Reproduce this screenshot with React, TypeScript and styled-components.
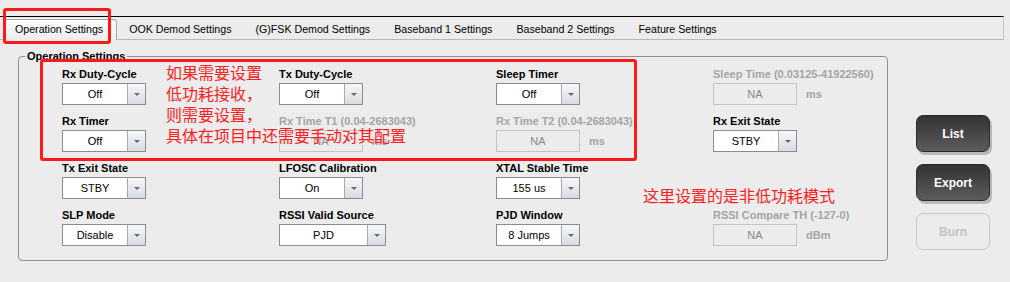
import React from "react";
import styled, { createGlobalStyle, css } from "styled-components";

const GlobalStyle = createGlobalStyle`
  html, body {
    margin: 0;
    padding: 0;
    background: #ececec;
  }
  body {
    font-family: "Liberation Sans", Arial, sans-serif;
    font-size: 11px;
    color: #000;
  }
`;

const Page = styled.div`
  position: relative;
  width: 1010px;
  height: 282px;
  overflow: hidden;
  background: #ececec;
`;

const TabStrip = styled.div`
  margin-top: 16px;
  border-top: 1px solid #000;
  border-bottom: 1px solid #b8b8b8;
  border-right: 1px solid #c8c8c8;
  width: 1004px;
  height: 24px;
  display: flex;
  align-items: flex-end;
  padding-left: 5px;
  box-sizing: border-box;
`;

const Tab = styled.div<{ $active?: boolean }>`
  padding: 0 12px;
  height: 19px;
  line-height: 19px;
  font-size: 10.65px;
  white-space: nowrap;
  ${(p) =>
    p.$active &&
    css`
      height: 20px;
      margin-bottom: -1px;
      padding: 0 13px 0 9px;
      background: linear-gradient(#fbfbfb, #ededed);
      border: 1px solid #a9a9a9;
      border-bottom: none;
      border-radius: 2px 4px 0 0;
    `}
`;

const Body = styled.div`
  display: flex;
  align-items: flex-start;
  padding-left: 18px;
  margin-top: 9px;
`;

const Group = styled.fieldset`
  margin: 0;
  padding: 0;
  width: 870px;
  box-sizing: border-box;
  border: 1px solid #8f8f8f;
  border-radius: 4px;
`;

const GroupTitle = styled.legend`
  margin-left: 6px;
  padding: 0 2px;
  font-weight: bold;
  font-size: 11px;
  line-height: 14px;
`;

const Grid = styled.div`
  display: grid;
  grid-template-columns: 217px 217px 217px 1fr;
  row-gap: 9px;
  padding: 4px 0 14px 43px;
`;

const Field = styled.div`
  display: flex;
  flex-direction: column;
  gap: 2px;
`;

const Label = styled.div<{ $disabled?: boolean }>`
  font-weight: bold;
  font-size: 11px;
  line-height: 14px;
  white-space: nowrap;
  color: ${(p) => (p.$disabled ? "#a4a4a4" : "#000")};
`;

const Combo = styled.div<{ $w?: number }>`
  width: ${(p) => p.$w ?? 84}px;
  height: 22px;
  box-sizing: border-box;
  display: flex;
  border: 1px solid #8c8c8c;
  background: #fff;
`;

const ComboValue = styled.div`
  flex: 1;
  text-align: center;
  line-height: 20px;
  font-size: 11px;
`;

const ComboArrow = styled.div`
  width: 17px;
  border-left: 1px solid #a9a9a9;
  background: linear-gradient(#f6f7f9, #d8dce2);
  display: flex;
  align-items: center;
  justify-content: center;
  &::after {
    content: "";
    border-left: 3px solid transparent;
    border-right: 3px solid transparent;
    border-top: 3px solid #6a6a6a;
  }
`;

const InputRow = styled.div`
  display: flex;
  align-items: center;
`;

const TextBox = styled.div`
  width: 84px;
  height: 22px;
  box-sizing: border-box;
  border: 1px solid #c3c3c3;
  background: #ececec;
  color: #8a8a8a;
  text-align: center;
  line-height: 20px;
  font-size: 11px;
`;

const Unit = styled.span`
  margin-left: 9px;
  font-weight: bold;
  color: #a4a4a4;
  font-size: 11px;
`;

const Buttons = styled.div`
  display: flex;
  flex-direction: column;
  gap: 12px;
  margin-left: 28px;
  padding-top: 66px;
`;

const Button = styled.button<{ $disabled?: boolean }>`
  width: 74px;
  height: 37px;
  border-radius: 7px;
  font-family: "Liberation Sans", Arial, sans-serif;
  font-weight: bold;
  font-size: 12px;
  padding: 0;
  ${(p) =>
    p.$disabled
      ? css`
          background: #ececec;
          border: 1px solid #c9c9c9;
          color: #c3c3c3;
        `
      : css`
          background: linear-gradient(#333333, #5c5c5c);
          border: 1px solid #2a2a2a;
          color: #fff;
          box-shadow: 2px 3px 0 #b9b9b9;
        `}
`;

const RedBox = styled.div<{ $x: number; $y: number; $w: number; $h: number }>`
  position: absolute;
  left: ${(p) => p.$x}px;
  top: ${(p) => p.$y}px;
  width: ${(p) => p.$w}px;
  height: ${(p) => p.$h}px;
  box-sizing: border-box;
  border: 3px solid #ff1a1a;
  border-radius: 3px;
  pointer-events: none;
`;

const Note = styled.div<{ $x: number; $y: number }>`
  position: absolute;
  left: ${(p) => p.$x}px;
  top: ${(p) => p.$y}px;
  font-family: "Noto Sans CJK SC", "Liberation Sans", sans-serif;
  font-size: 16px;
  line-height: 21px;
  color: #ff2020;
  white-space: nowrap;
`;

const Select = ({ label, value, w }: { label: string; value: string; w?: number }) => (
  <Field>
    <Label>{label}</Label>
    <Combo $w={w}>
      <ComboValue>{value}</ComboValue>
      <ComboArrow />
    </Combo>
  </Field>
);

const Disabled = ({ label, unit }: { label: string; unit: string }) => (
  <Field>
    <Label $disabled>{label}</Label>
    <InputRow>
      <TextBox>NA</TextBox>
      <Unit>{unit}</Unit>
    </InputRow>
  </Field>
);

const tabs = [
  "Operation Settings",
  "OOK Demod Settings",
  "(G)FSK Demod Settings",
  "Baseband 1 Settings",
  "Baseband 2 Settings",
  "Feature Settings",
];

export default function App() {
  return (
    <Page>
      <GlobalStyle />
      <TabStrip>
        {tabs.map((t, i) => (
          <Tab key={t} $active={i === 0}>
            {t}
          </Tab>
        ))}
      </TabStrip>
      <Body>
        <Group>
          <GroupTitle>Operation Settings</GroupTitle>
          <Grid>
            <Select label="Rx Duty-Cycle" value="Off" />
            <Select label="Tx Duty-Cycle" value="Off" />
            <Select label="Sleep Timer" value="Off" />
            <Disabled label="Sleep Time (0.03125-41922560)" unit="ms" />

            <Select label="Rx Timer" value="Off" />
            <Disabled label="Rx Time T1 (0.04-2683043)" unit="ms" />
            <Disabled label="Rx Time T2 (0.04-2683043)" unit="ms" />
            <Select label="Rx Exit State" value="STBY" />

            <Select label="Tx Exit State" value="STBY" />
            <Select label="LFOSC Calibration" value="On" />
            <Select label="XTAL Stable Time" value="155 us" />
            <div />

            <Select label="SLP Mode" value="Disable" />
            <Select label="RSSI Valid Source" value="PJD" w={107} />
            <Select label="PJD Window" value="8 Jumps" />
            <Disabled label="RSSI Compare TH (-127-0)" unit="dBm" />
          </Grid>
        </Group>
        <Buttons>
          <Button>List</Button>
          <Button>Export</Button>
          <Button $disabled>Burn</Button>
        </Buttons>
      </Body>

      <RedBox $x={3} $y={8} $w={108} $h={36} />
      <RedBox $x={40} $y={59} $w={597} $h={102} />
      <Note $x={166} $y={62}>
        如果需要设置
        <br />
        低功耗接收，
        <br />
        则需要设置，
        <br />
        具体在项目中还需要手动对其配置
      </Note>
      <Note $x={643} $y={185}>
        这里设置的是非低功耗模式
      </Note>
    </Page>
  );
}
